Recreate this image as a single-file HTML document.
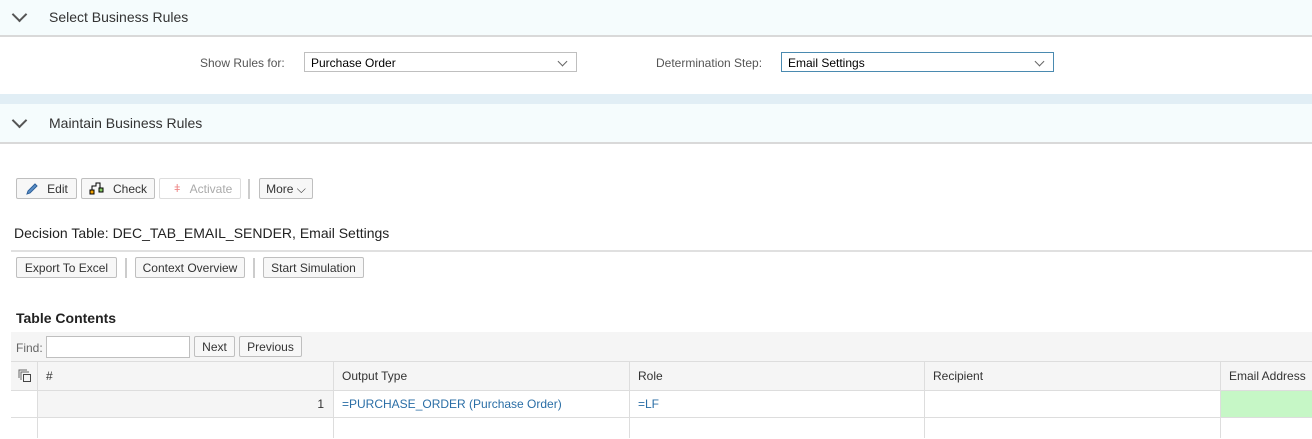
<!DOCTYPE html><html><head><style>
body{margin:0;width:1312px;height:438px;overflow:hidden;background:#fff;font-family:"Liberation Sans",Arial,sans-serif;font-size:12px;color:#333;position:relative}
.a{position:absolute}
.hd{left:0;width:1312px;background:#f5fcfd;border-bottom:2px solid #d9d9d9;font-size:14px;color:#333}
.chev{position:absolute;left:14px;width:9px;height:9px;border-right:2px solid #555;border-bottom:2px solid #555;transform:rotate(45deg)}
.sel{border:1px solid #bfbfbf;background:#fff;height:20px;line-height:20px;padding-left:6px;box-sizing:border-box;font-size:12px;color:#000}
.sel i{position:absolute;right:10px;top:5px;width:6px;height:6px;border-right:1px solid #666;border-bottom:1px solid #666;transform:rotate(45deg)}
.btn{position:absolute;height:21px;line-height:21px;box-sizing:border-box;border:1px solid #bfbfbf;border-radius:2px;background:#f7f7f7;color:#333;font-size:12px;text-align:center}
.sep{position:absolute;width:2px;height:20px;background:#ccc}
</style></head><body>
<div class="a hd" style="top:0;height:35px"><span class="chev" style="top:9px"></span><span class="a" style="left:49px;top:9px">Select Business Rules</span></div>
<div class="a" style="left:200px;top:56px;color:#555">Show Rules for:</div>
<div class="a sel" style="left:304px;top:52px;width:273px">Purchase Order<i></i></div>
<div class="a" style="left:656px;top:56px;color:#555">Determination Step:</div>
<div class="a sel" style="left:781px;top:52px;width:273px;border-color:#4a8ab0">Email Settings<i></i></div>
<div class="a" style="left:0;top:94px;width:1312px;height:10px;background:#e1eef5"></div>
<div class="a hd" style="top:104px;height:38px"><span class="chev" style="top:11px"></span><span class="a" style="left:49px;top:11px">Maintain Business Rules</span></div>

<div class="btn" style="left:16px;top:178px;width:61px"><svg width="14" height="14" style="position:absolute;left:8px;top:3px"><path d="M2 12 L3 9 L10 2 L12 4 L5 11 Z" fill="#5b8fc7" stroke="#2d5f99" stroke-width="1"/></svg><span style="margin-left:22px">Edit</span></div>
<div class="btn" style="left:81px;top:178px;width:74px"><svg width="16" height="14" style="position:absolute;left:7px;top:3px"><rect x="1" y="8" width="4" height="4" fill="#f0a000" stroke="#000"/><rect x="10" y="6" width="4" height="4" fill="#8c6" stroke="#000"/><path d="M3 8 V4 H7 V1 H11 V6" fill="none" stroke="#000"/></svg><span style="margin-left:24px">Check</span></div>
<div class="btn" style="left:159px;top:178px;width:82px;background:#fff;border-color:#ddd;color:#aaa"><span style="position:absolute;left:14px;top:0px;color:#e88;font-size:11px">ǂ</span><span style="margin-left:22px">Activate</span></div>
<div class="sep" style="left:248px;top:179px"></div>
<div class="btn" style="left:259px;top:178px;width:54px">More ⌵</div>

<div class="a" style="left:14px;top:225px;font-size:14px;color:#222">Decision Table: DEC_TAB_EMAIL_SENDER, Email Settings</div>
<div class="a" style="left:11px;top:250px;width:1301px;height:2px;background:#e0e0e0"></div>
<div class="btn" style="left:16px;top:257px;width:101px">Export To Excel</div>
<div class="sep" style="left:125px;top:258px"></div>
<div class="btn" style="left:135px;top:257px;width:110px">Context Overview</div>
<div class="sep" style="left:253px;top:258px"></div>
<div class="btn" style="left:263px;top:257px;width:101px">Start Simulation</div>

<div class="a" style="left:16px;top:310px;font-size:14px;font-weight:bold;color:#222">Table Contents</div>
<div class="a" style="left:11px;top:332px;width:1301px;height:30px;background:#f5f5f5"></div>
<div class="a" style="left:16px;top:341px;color:#666">Find:</div>
<div class="a" style="left:46px;top:336px;width:144px;height:22px;border:1px solid #bfbfbf;background:#fff;box-sizing:border-box"></div>
<div class="btn" style="left:194px;top:336px;width:41px">Next</div>
<div class="btn" style="left:239px;top:336px;width:63px">Previous</div>

<div class="a" style="left:11px;top:361px;width:1301px;height:77px;background:#fff;border-top:1px solid #ddd"></div>
<div class="a" style="left:11px;top:362px;width:1301px;height:28px;background:#f5f5f5;border-bottom:1px solid #ddd"></div>
<div class="a" style="left:37px;top:391px;width:296px;height:26px;background:#f5f5f5"></div>
<div class="a" style="left:11px;top:417px;width:1301px;height:1px;background:#ddd"></div>
<div class="a" style="left:1221px;top:391px;width:91px;height:26px;background:#c6f7c6"></div>
<div class="a" style="left:37px;top:362px;width:1px;height:76px;background:#ddd"></div>
<div class="a" style="left:333px;top:362px;width:1px;height:76px;background:#ddd"></div>
<div class="a" style="left:629px;top:362px;width:1px;height:76px;background:#ddd"></div>
<div class="a" style="left:924px;top:362px;width:1px;height:76px;background:#ddd"></div>
<div class="a" style="left:1220px;top:362px;width:1px;height:76px;background:#ddd"></div>
<svg class="a" style="left:18px;top:369px" width="14" height="14"><path d="M1 9 V1 H9" fill="none" stroke="#666"/><path d="M3 11 V3 H11" fill="none" stroke="#666"/><rect x="5.5" y="5.5" width="7" height="7" fill="none" stroke="#444"/></svg>
<div class="a" style="left:46px;top:369px">#</div>
<div class="a" style="left:342px;top:369px">Output Type</div>
<div class="a" style="left:638px;top:369px">Role</div>
<div class="a" style="left:933px;top:369px">Recipient</div>
<div class="a" style="left:1229px;top:369px">Email Address</div>
<div class="a" style="left:300px;top:397px;width:24px;text-align:right">1</div>
<div class="a" style="left:342px;top:397px;color:#2a6ea6">=PURCHASE_ORDER (Purchase Order)</div>
<div class="a" style="left:638px;top:397px;color:#2a6ea6">=LF</div>
</body></html>
